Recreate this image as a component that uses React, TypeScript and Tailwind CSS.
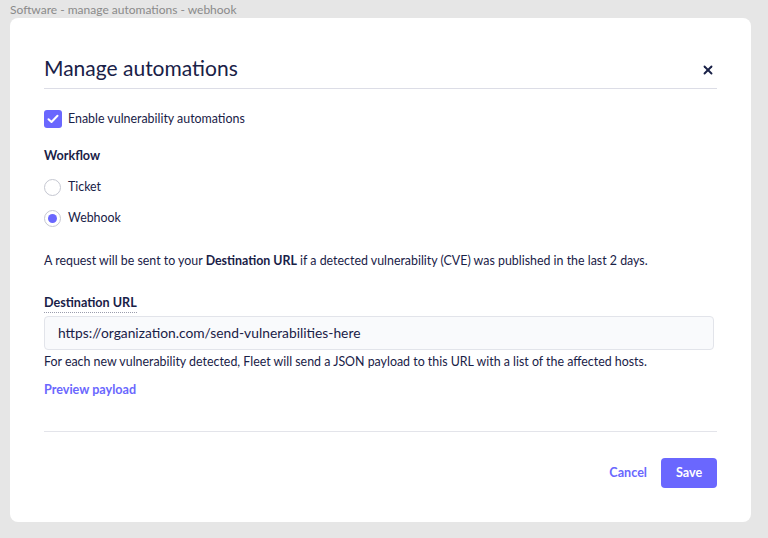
import { X } from "lucide-react";

export default function App() {
  return (
    <div
      className="h-[538px] w-[768px] overflow-hidden bg-[#e6e6e6] px-[10px] text-[#192147]"
      style={{ fontFamily: "Lato, 'Noto Sans', sans-serif" }}
    >
      <div className="h-[18px] pt-[2px] text-[12px] leading-[16px] text-[#8a8a8a]">
        Software - manage automations - webhook
      </div>

      <div className="h-[504px] w-[741px] rounded-[8px] bg-white px-[34px] pt-[34px]">
        {/* header */}
        <div className="flex h-[37px] items-center justify-between border-b border-[#dcdde6]">
          <h1 className="-mt-[5px] text-[21px] font-normal leading-[28px] text-[#192147]">
            Manage automations
          </h1>
          <X size={14} strokeWidth={3.2} className="mr-[2px] -mt-[1px] text-[#192147]" />
        </div>

        <label className="mt-[21px] flex items-center gap-[6px] text-[12.4px] leading-[18px]">
          <span className="grid h-[18px] w-[18px] place-items-center rounded-[3px] bg-[#6a67fe]">
            <svg width="12" height="10" viewBox="0 0 12 10" fill="none">
              <path d="M1.5 5.2 4.5 8 10.5 1.8" stroke="white" strokeWidth="2" strokeLinecap="round" strokeLinejoin="round" />
            </svg>
          </span>
          Enable vulnerability automations
        </label>

        <div className="mt-[19px] text-[12.6px] font-bold leading-[18px]">Workflow</div>

        <div className="mt-[13px] flex flex-col gap-[13px]">
          <label className="flex items-center gap-[7px] text-[12.4px] leading-[18px]">
            <span className="h-[17px] w-[17px] rounded-full border-[1.5px] border-[#c5c7d1] bg-white" />
            Ticket
          </label>
          <label className="flex items-center gap-[7px] text-[12.4px] leading-[18px]">
            <span className="grid h-[17px] w-[17px] place-items-center rounded-full border-[1.5px] border-[#c5c7d1] bg-white">
              <span className="h-[9px] w-[9px] rounded-full bg-[#6a67fe]" />
            </span>
            Webhook
          </label>
        </div>

        <p className="mt-[25px] text-[12.4px] leading-[18px]">
          A request will be sent to your <b className="font-bold">Destination URL</b> if a detected
          vulnerability (CVE) was published in the last 2 days.
        </p>

        <div className="mt-[19px]">
          <span className="inline-block border-b border-dotted border-[#9a9cac] pb-[1px] text-[12.6px] font-bold leading-[17px]">
            Destination URL
          </span>
        </div>

        <div className="mt-[3px] flex h-[34px] w-[670px] items-center rounded-[4px] border border-[#e2e4ea] bg-[#f9fafc] px-[13px] text-[13.8px] text-[#192147]">
          https://organization.com/send-vulnerabilities-here
        </div>

        <p className="mt-[3px] text-[12.4px] leading-[18px]">
          For each new vulnerability detected, Fleet will send a JSON payload to this URL with a list of
          the affected hosts.
        </p>

        <div className="mt-[10px] text-[12.6px] font-bold leading-[18px] text-[#6a67fe]">Preview payload</div>

        <div className="mt-[32px] border-t border-[#e3e4ea]" />

        <div className="mt-[26px] flex items-center justify-end gap-[14px]">
          <button className="text-[12.6px] font-bold text-[#6a67fe]">Cancel</button>
          <button className="h-[30px] w-[56px] rounded-[4px] bg-[#6a67fe] text-[12.6px] font-bold text-white">
            Save
          </button>
        </div>
      </div>
    </div>
  );
}
